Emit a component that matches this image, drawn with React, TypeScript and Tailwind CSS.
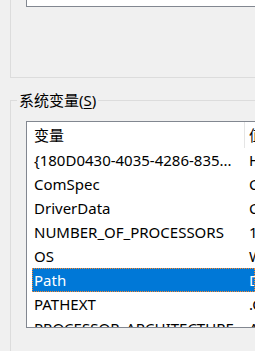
import React from 'react'
import clsx from 'clsx'

type Row = { name: string; value: string }

const rows: Row[] = [
  { name: '{180D0430-4035-4286-835...', value: 'HKLM' },
  { name: 'ComSpec', value: 'C:\\Windows\\system32\\cmd.exe' },
  { name: 'DriverData', value: 'C:\\Windows\\System32\\Drivers\\DriverData' },
  { name: 'NUMBER_OF_PROCESSORS', value: '12' },
  { name: 'OS', value: 'Windows_NT' },
  { name: 'Path', value: 'D:\\tools' },
  { name: 'PATHEXT', value: '.COM;.EXE;.BAT;.CMD' },
  { name: 'PROCESSOR_ARCHITECTURE', value: 'AMD64' },
]

const selected = 'Path'

export default function App() {
  return (
    <div className="w-[255px] h-[351px] overflow-hidden bg-[#f0f0f0] text-[15px] text-black font-['Noto_Sans','Noto_Sans_CJK_SC',sans-serif]">
      {/* tail of the user variables group */}
      <div className="ml-[10px] h-[78px] border-l border-b border-[#dcdcdc] pl-[15px]">
        <div className="h-[7px] border-l border-b border-[#828790] bg-white" />
      </div>

      {/* system variables group */}
      <div className="relative ml-[10px] mt-[22px] h-[251px] border-l border-t border-[#dcdcdc] pl-[15px] pt-[20px]">
        <span className="absolute left-[6px] -top-[11px] bg-[#f0f0f0] px-[2px] leading-[20px] whitespace-nowrap">
          系统变量(<span className="underline underline-offset-2">S</span>)
        </span>

        <div className="h-[207px] border-l border-t border-b border-[#828790] bg-white overflow-hidden">
          <div className="flex h-[26px] whitespace-nowrap">
            <div className="w-[217px] shrink-0 pl-[7px] flex items-center">变量</div>
            <div className="border-l border-[#e5e5e5] pl-[4px] flex items-center">值</div>
          </div>

          {rows.map((row) => {
            const isSel = row.name === selected
            return (
              <div
                key={row.name}
                className={clsx(
                  'ml-[5px] flex h-[24px] items-center whitespace-nowrap',
                  isSel && 'bg-[#0078d7] text-white outline-1 outline-dotted outline-[#ff8728] -outline-offset-1'
                )}
              >
                <div className="w-[212px] shrink-0 pl-[2px] overflow-hidden">{row.name}</div>
                <div className="pl-[5px]">{row.value}</div>
              </div>
            )
          })}
        </div>
      </div>
    </div>
  )
}
